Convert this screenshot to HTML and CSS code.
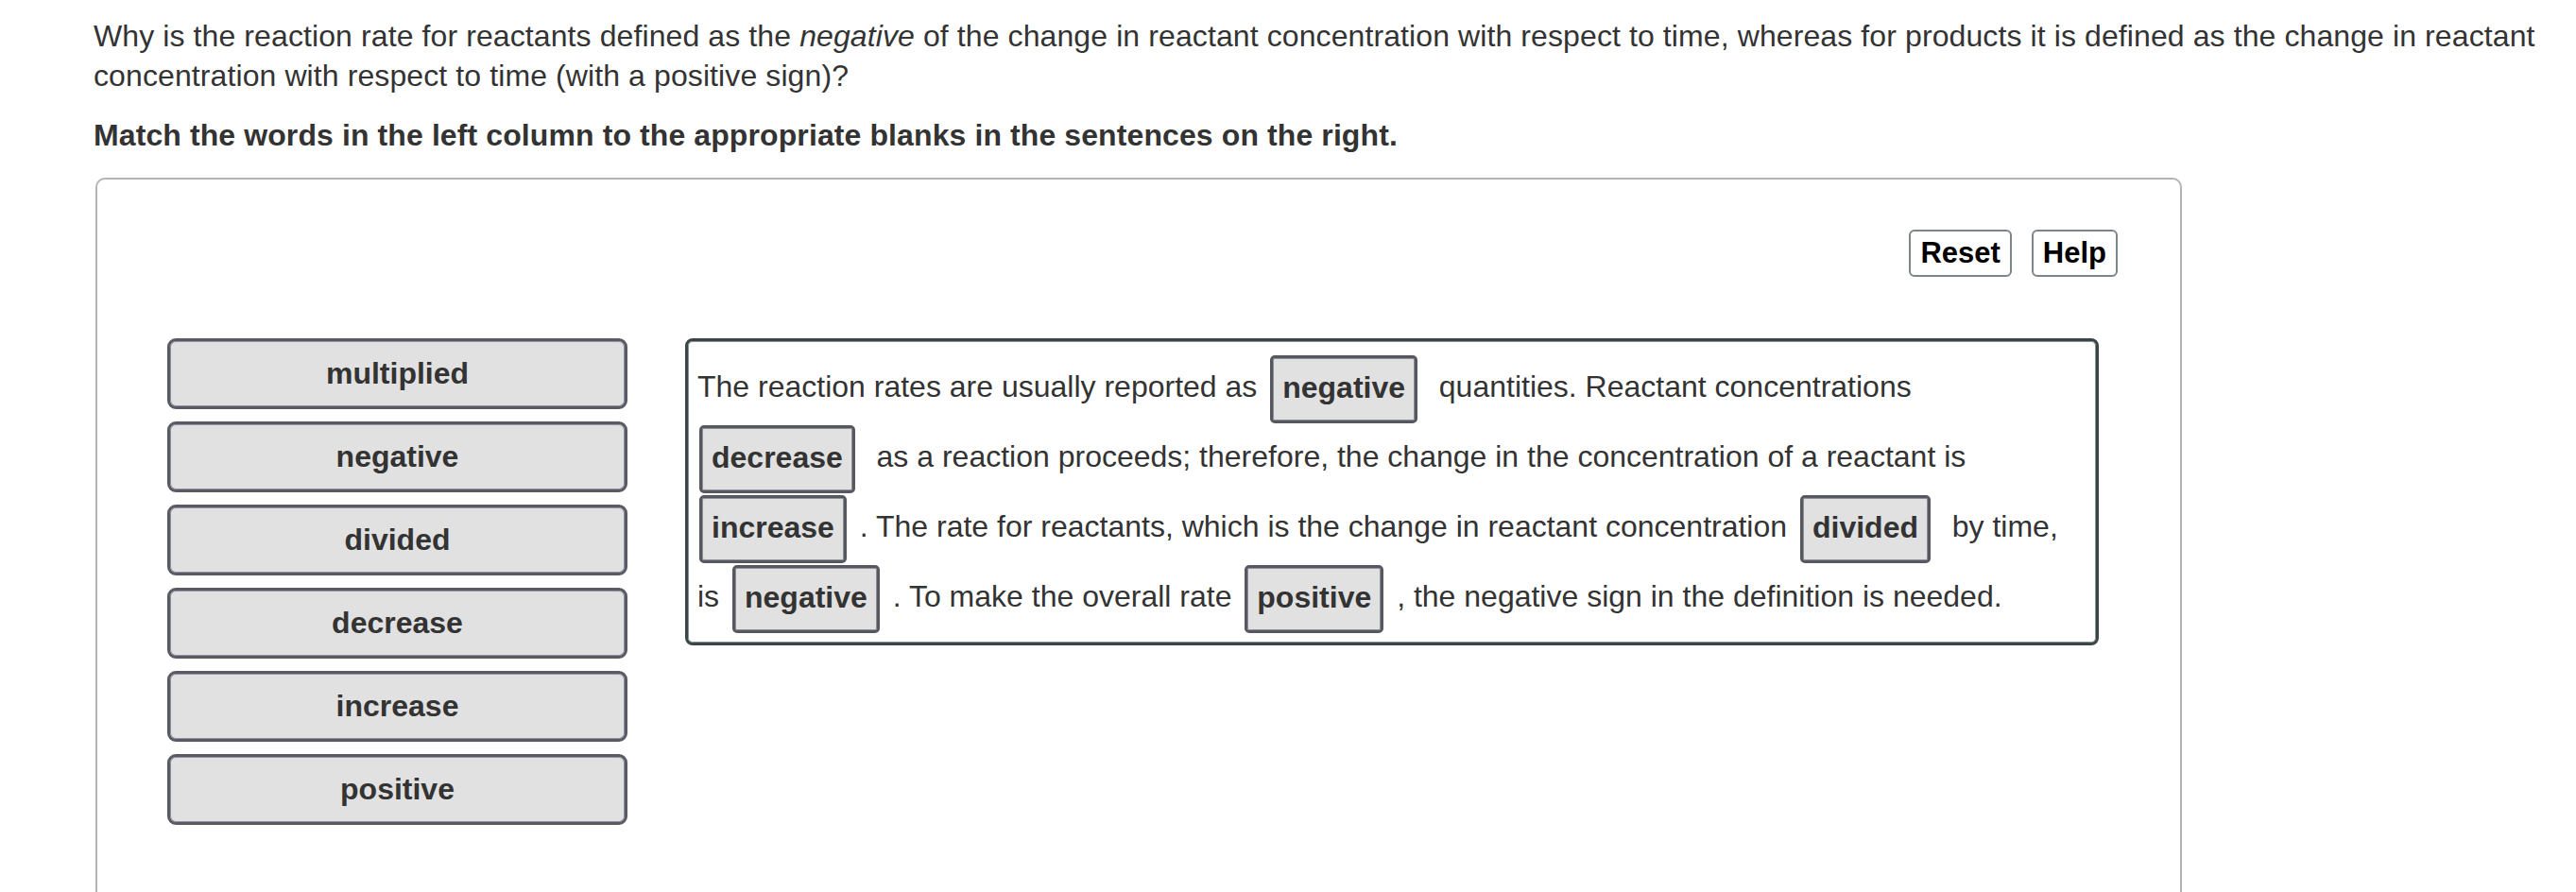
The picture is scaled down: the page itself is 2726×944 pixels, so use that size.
FILE: index.html
```html
<!DOCTYPE html>
<html>
<head>
<meta charset="utf-8">
<link rel="stylesheet" href="styles.css">
</head>
<body>
<div class="page">
  <p class="question">Why is the reaction rate for reactants defined as the <em>negative</em> of the change in reactant concentration with respect to time, whereas for products it is defined as the change in reactant concentration with respect to time (with a positive sign)?</p>
  <p class="instruction">Match the words in the left column to the appropriate blanks in the sentences on the right.</p>
  <div class="panel">
    <div class="toolbar">
      <button class="btn">Reset</button>
      <button class="btn">Help</button>
    </div>
    <div class="workspace">
      <div class="words">
        <div class="word">multiplied</div>
        <div class="word">negative</div>
        <div class="word">divided</div>
        <div class="word">decrease</div>
        <div class="word">increase</div>
        <div class="word">positive</div>
      </div>
      <div class="sentences">
        <div class="line">The reaction rates are usually reported as <span class="blank">negative</span>&nbsp; quantities. Reactant concentrations</div>
        <div class="line"><span class="blank first">decrease</span>&nbsp; as a reaction proceeds; therefore, the change in the concentration of a reactant is</div>
        <div class="line"><span class="blank first">increase</span> . The rate for reactants, which is the change in reactant concentration <span class="blank">divided</span>&nbsp; by time,</div>
        <div class="line">is <span class="blank">negative</span> . To make the overall rate <span class="blank">positive</span> , the negative sign in the definition is needed.</div>
      </div>
    </div>
  </div>
</div>
</body>
</html>
```
FILE: styles.css
```css
html, body {
  margin: 0;
  background: #ffffff;
}
body {
  font-family: "Liberation Sans", Arial, Helvetica, sans-serif;
  color: #333333;
  font-size: 32px;
}
.page {
  padding: 17px 20px 0 99px;
}
.question {
  margin: 0;
  line-height: 42px;
  letter-spacing: 0.1px;
}
.instruction {
  margin: 21px 0 0 0;
  line-height: 42px;
  font-weight: bold;
  letter-spacing: 0.1px;
}
.panel {
  margin: 24px 0 0 2px;
  width: 2208px;
  min-height: 900px;
  border: 2px solid #b4b4b4;
  border-radius: 10px;
  padding: 53px 66px 0 74px;
  box-sizing: border-box;
}
.toolbar {
  display: flex;
  justify-content: flex-end;
  gap: 21px;
}
.btn {
  font-family: inherit;
  font-size: 31px;
  font-weight: bold;
  color: #000;
  background: #fff;
  border: 2px solid #7c8588;
  border-radius: 6px;
  height: 50px;
  padding: 0 10px;
  line-height: 44px;
}
.workspace {
  display: flex;
  align-items: flex-start;
  gap: 61px;
  margin-top: 65px;
}
.words {
  display: flex;
  flex-direction: column;
  gap: 13px;
  width: 487px;
  flex: none;
}
.word {
  height: 75px;
  box-sizing: border-box;
  background: #e1e1e1;
  border: 3px solid #5a5a65;
  box-shadow: inset 0 0 0 1px #9090a0;
  border-radius: 9px;
  display: flex;
  align-items: center;
  justify-content: center;
  font-weight: bold;
}
.sentences {
  width: 1496px;
  flex: none;
  box-sizing: border-box;
  border: 3px solid #3b4447;
  box-shadow: inset 0 0 0 1px #8a9296;
  border-radius: 8px;
  padding: 11px 10px 12px 10px;
}
.line {
  height: 74px;
  line-height: 74px;
  white-space: nowrap;
}
.blank {
  display: inline-block;
  box-sizing: border-box;
  height: 72px;
  line-height: 62px;
  vertical-align: middle;
  background: #e1e1e1;
  border: 3px solid #575760;
  box-shadow: inset 0 0 0 1px #8e8e9a;
  border-radius: 5px;
  padding: 0 10px 4px 10px;
  margin: 0 5px;
  font-weight: bold;
}
.blank.first {
  margin-left: 2px;
}
```
